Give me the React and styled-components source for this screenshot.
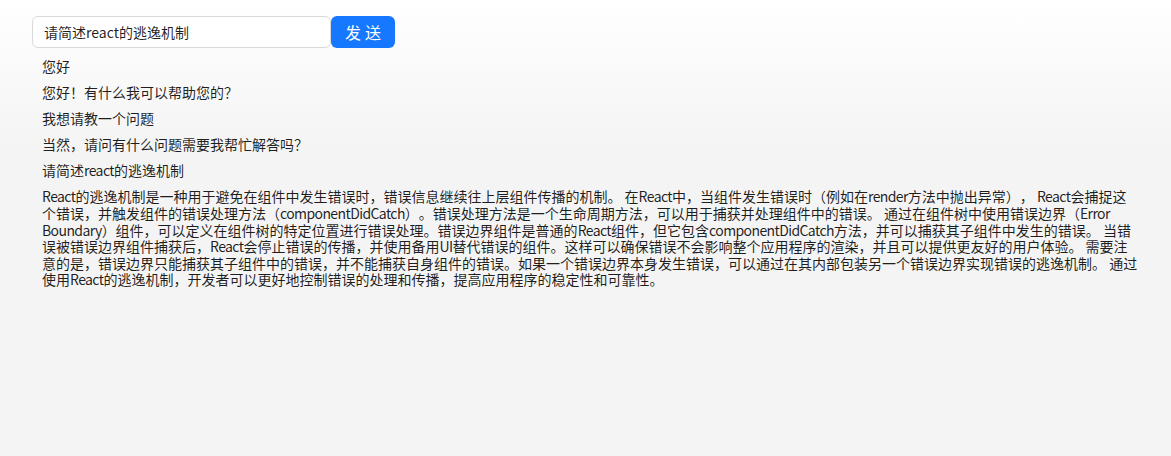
import React, { useState } from 'react'
import styled, { createGlobalStyle } from 'styled-components'

const GlobalStyle = createGlobalStyle`
  html, body {
    margin: 0;
    padding: 0;
    min-height: 100%;
  }

  body {
    background: linear-gradient(to bottom, #ffffff 0, #f4f4f4 150px) no-repeat, #f4f4f4;
    min-height: 456px;
    font-family: "Noto Sans CJK SC", "Noto Sans", "Liberation Sans", sans-serif;
    color: rgba(0, 0, 0, 0.88);
    text-spacing-trim: space-all;
  }
`

const Page = styled.div`
  padding: 16px 32px;
`

const InputBar = styled.div`
  display: flex;
  align-items: stretch;
  height: 32px;
`

const TextInput = styled.input`
  box-sizing: border-box;
  width: 299px;
  height: 32px;
  padding: 4px 11px;
  border: 1px solid #d9d9d9;
  border-radius: 6px;
  background: #fff;
  font-family: inherit;
  font-size: 14px;
  color: rgba(0, 0, 0, 0.88);
  outline: none;
`

const SendButton = styled.button`
  box-sizing: border-box;
  width: 64px;
  height: 32px;
  border: none;
  border-radius: 6px;
  background: #1677ff;
  color: #fff;
  font-family: inherit;
  font-size: 16px;
  letter-spacing: 4px;
  padding: 0 0 0 4px;
  cursor: pointer;
`

const MessageList = styled.div`
  display: flex;
  flex-direction: column;
  gap: 9.5px;
  margin-top: 10px;
  padding-left: 10px;
`

const Message = styled.div`
  font-size: 14px;
  line-height: 16.6px;
  white-space: pre-wrap;
  text-spacing-trim: space-all;
`

// latin runs sit a little tighter than the CJK around them
const Latin = styled.span`
  letter-spacing: -0.6px;
`

const messages = [
  '您好',
  '您好！有什么我可以帮助您的？',
  '我想请教一个问题',
  '当然，请问有什么问题需要我帮忙解答吗？',
  '请简述react的逃逸机制',
  'React的逃逸机制是一种用于避免在组件中发生错误时，错误信息继续往上层组件传播的机制。 在React中，当组件发生错误时（例如在render方法中抛出异常）， React会捕捉这个错误，并触发组件的错误处理方法（componentDidCatch）。错误处理方法是一个生命周期方法，可以用于捕获并处理组件中的错误。 通过在组件树中使用错误边界（Error Boundary）组件，可以定义在组件树的特定位置进行错误处理。错误边界组件是普通的React组件，但它包含componentDidCatch方法，并可以捕获其子组件中发生的错误。 当错误被错误边界组件捕获后，React会停止错误的传播，并使用备用UI替代错误的组件。这样可以确保错误不会影响整个应用程序的渲染，并且可以提供更友好的用户体验。 需要注意的是，错误边界只能捕获其子组件中的错误，并不能捕获自身组件的错误。如果一个错误边界本身发生错误，可以通过在其内部包装另一个错误边界实现错误的逃逸机制。 通过使用React的逃逸机制，开发者可以更好地控制错误的处理和传播，提高应用程序的稳定性和可靠性。'
]

function MessageText ({ text }) {
  const parts = text.split(/([A-Za-z]+)/)
  return parts.map((p, i) => (i % 2 === 1 ? <Latin key={i}>{p}</Latin> : p))
}

export default function App () {
  const [value, setValue] = useState('请简述react的逃逸机制')
  return (
    <>
      <GlobalStyle />
      <Page>
        <InputBar>
          <TextInput value={value} onChange={(e) => setValue(e.target.value)} />
          <SendButton>发送</SendButton>
        </InputBar>
        <MessageList>
          {messages.map((m, i) => <Message key={i}><MessageText text={m} /></Message>)}
        </MessageList>
      </Page>
    </>
  )
}
